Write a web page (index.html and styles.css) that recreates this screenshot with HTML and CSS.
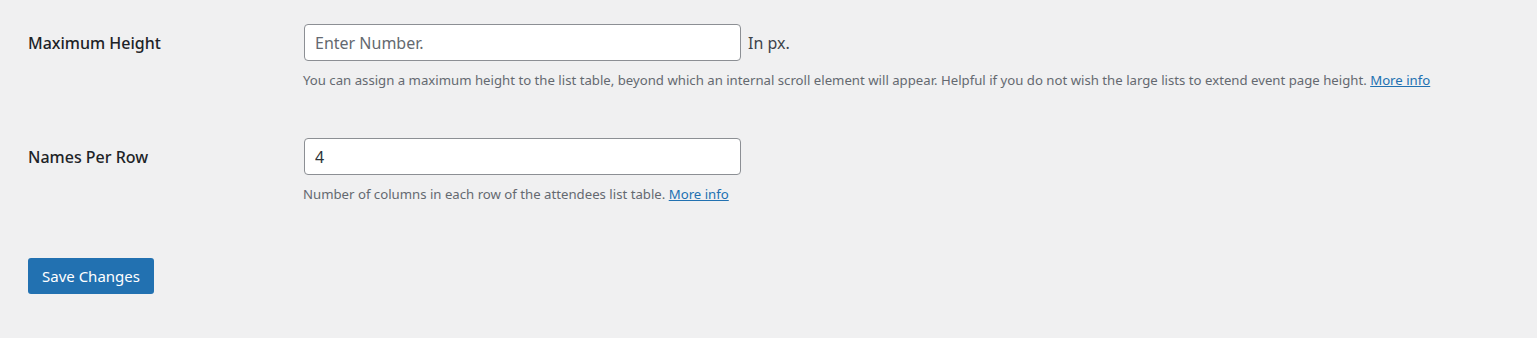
FILE: index.html
```html
<!DOCTYPE html>
<html lang="en">
<head>
    <meta charset="UTF-8">
    <meta name="viewport" content="width=device-width, initial-scale=1.0">
    <title>Attendee List Settings</title>
    <link rel="stylesheet" href="styles.css">
</head>
<body>
    <form class="settings">
        <div class="field-row">
            <label class="field-label" for="maxHeight">Maximum Height</label>
            <div class="field-body">
                <div class="input-line">
                    <input type="text" id="maxHeight" class="text-input" placeholder="Enter Number.">
                    <span class="unit">In px.</span>
                </div>
                <p class="description">You can assign a maximum height to the list table, beyond which an internal scroll element will appear. Helpful if you do not wish the large lists to extend event page height. <a href="#">More info</a></p>
            </div>
        </div>

        <div class="field-row">
            <label class="field-label" for="namesPerRow">Names Per Row</label>
            <div class="field-body">
                <div class="input-line">
                    <input type="text" id="namesPerRow" class="text-input" value="4">
                </div>
                <p class="description">Number of columns in each row of the attendees list table. <a href="#">More info</a></p>
            </div>
        </div>

        <button type="button" class="save-button">Save Changes</button>
    </form>
</body>
</html>
```

FILE: styles.css
```css
body {
    margin: 0;
    background-color: #f0f0f1;
    color: #3c434a;
    font-family: "Noto Sans", "Open Sans", sans-serif;
}

.settings {
    padding: 24px 28px 0 28px;
}

.field-row {
    display: flex;
    margin-bottom: 48px;
}

.field-label {
    width: 276px;
    flex-shrink: 0;
    padding-top: 8px;
    font-size: 16px;
    font-weight: 500;
    line-height: 22px;
    color: #1d2327;
}

.input-line {
    display: flex;
    align-items: center;
}

.text-input {
    width: 437px;
    height: 37px;
    box-sizing: border-box;
    padding: 0 10px;
    border: 1px solid #8c8f94;
    border-radius: 4px;
    background: #fff;
    font-family: inherit;
    font-size: 16px;
    color: #2c3338;
}

.text-input::placeholder {
    color: #646970;
}

.unit {
    margin-left: 7px;
    font-size: 16px;
}

.description {
    margin: 9px 0 0 -1px;
    font-size: 13.2px;
    line-height: 20px;
    color: #646970;
}

.description a {
    color: #2271b1;
}

.save-button {
    margin-top: 6px;
    height: 36px;
    padding: 0 14px;
    border: none;
    border-radius: 3px;
    background-color: #2271b1;
    color: #fff;
    font-family: inherit;
    font-size: 15px;
    cursor: pointer;
}
```
